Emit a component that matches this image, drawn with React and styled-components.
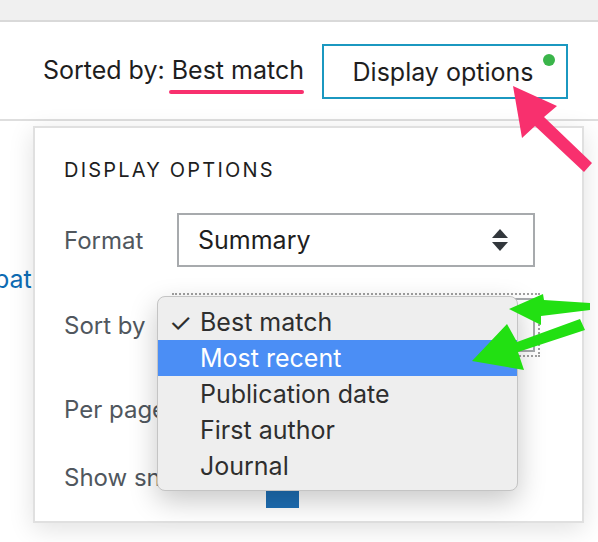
import React from 'react';
import styled, { createGlobalStyle } from 'styled-components';

const GlobalStyle = createGlobalStyle`
  html, body {
    margin: 0;
    padding: 0;
    background: #ffffff;
  }
  body {
    font-family: Inter, "Open Sans", Roboto, sans-serif;
    color: #1e1e1e;
  }
`;

const Page = styled.div`
  position: relative;
  width: 598px;
  height: 542px;
  overflow: hidden;
  background: #fff;
`;

const TopBand = styled.div`
  height: 20px;
  background: #f0f0f0;
  border-bottom: 2px solid #d9d9d9;
`;

const Toolbar = styled.div`
  height: 97px;
  display: flex;
  align-items: center;
  justify-content: flex-end;
  gap: 18px;
  padding-right: 30px;
  border-bottom: 2px solid #dedede;
  font-size: 25px;
`;

const SortedBy = styled.span`
  color: #1e1e1e;
  margin-top: -2px;
`;

const SortValue = styled.span`
  position: relative;
  &::after {
    content: '';
    position: absolute;
    left: -3px;
    right: 0;
    bottom: -9px;
    height: 4px;
    border-radius: 2px;
    background: #f8306e;
  }
`;

const DisplayButton = styled.button`
  position: relative;
  width: 246px;
  height: 55px;
  border: 2px solid #1b98c0;
  background: #fff;
  font: inherit;
  font-size: 25px;
  color: #1e1e1e;
  padding: 0 4px 0 0;
  margin-top: 2px;
`;

const Dot = styled.span`
  position: absolute;
  right: 11px;
  top: 8px;
  width: 12px;
  height: 12px;
  border-radius: 50%;
  background: #3ab54a;
`;

const Results = styled.div`
  padding-top: 143px;
  font-size: 25px;
`;

const ResultLink = styled.a`
  display: block;
  margin-left: -6px;
  color: #0d6bb3;
  text-decoration: none;
`;

const Panel = styled.div`
  position: absolute;
  left: 33px;
  top: 126px;
  width: 551px;
  height: 397px;
  background: #fff;
  border: 2px solid #e0e0e0;
  box-shadow: 0 6px 24px rgba(0, 0, 0, 0.12);
  padding: 30px 46px 0 29px;
  box-sizing: border-box;
`;

const Heading = styled.div`
  font-size: 20px;
  line-height: 24px;
  letter-spacing: 2.2px;
  color: #1e1e1e;
`;

const FieldRow = styled.div`
  display: flex;
  align-items: center;
  height: 54px;
  margin-top: ${(p) => p.gap}px;
`;

const Label = styled.span`
  width: 113px;
  flex: none;
  font-size: 24px;
  color: #50575e;
  white-space: nowrap;
`;

const SelectBox = styled.div`
  position: relative;
  box-sizing: border-box;
  width: ${(p) => p.width || 358}px;
  height: 54px;
  border: 2px solid #a7aaad;
  display: flex;
  align-items: center;
  justify-content: space-between;
  padding: 0 24px 0 19px;
  font-size: 25px;
  color: #1e1e1e;
  background: #fff;
  outline: ${(p) => (p.focused ? '2px dotted #a0a0a0' : 'none')};
  outline-offset: 3px;
`;

const Toggle = styled.span`
  display: block;
  width: 33px;
  height: 26px;
  margin-left: 89px;
  margin-top: 36px;
  background: #1e6fb5;
`;

const Menu = styled.ul`
  position: absolute;
  left: 157px;
  top: 296px;
  width: 361px;
  height: 195px;
  box-sizing: border-box;
  margin: 0;
  padding: 7px 0 0;
  list-style: none;
  background: #eeeeee;
  border: 1px solid #c4c4c4;
  border-radius: 8px;
  box-shadow: 0 10px 28px rgba(0, 0, 0, 0.22);
  font-size: 25px;
`;

const MenuItem = styled.li`
  display: flex;
  align-items: center;
  height: 36px;
  padding-left: 11px;
  color: ${(p) => (p.active ? '#fff' : '#2e2e2e')};
  background: ${(p) => (p.active ? '#4b8ef5' : 'transparent')};
`;

const Check = styled.span`
  width: 31px;
  flex: none;
  font-size: 26px;
`;

const Overlay = styled.svg`
  position: absolute;
  left: 0;
  top: 0;
  pointer-events: none;
`;

const UpDown = () => (
  <svg width="18" height="24" viewBox="0 0 18 24">
    <path d="M9 1 L17 10 H1 Z" fill="#32373c" />
    <path d="M9 23 L17 14 H1 Z" fill="#32373c" />
  </svg>
);

const options = ['Best match', 'Most recent', 'Publication date', 'First author', 'Journal'];

export default function App() {
  return (
    <Page>
      <GlobalStyle />
      <TopBand />
      <Toolbar>
        <SortedBy>
          Sorted by: <SortValue>Best match</SortValue>
        </SortedBy>
        <DisplayButton>
          Display options
          <Dot />
        </DisplayButton>
      </Toolbar>
      <Results>
        <ResultLink href="#">bat</ResultLink>
      </Results>

      <Panel>
        <Heading>DISPLAY OPTIONS</Heading>
        <FieldRow gap={31}>
          <Label>Format</Label>
          <SelectBox>
            Summary
            <UpDown />
          </SelectBox>
        </FieldRow>
        <FieldRow gap={31}>
          <Label>Sort by</Label>
          <SelectBox focused>
            Best match
            <UpDown />
          </SelectBox>
        </FieldRow>
        <FieldRow gap={30}>
          <Label>Per page</Label>
          <SelectBox width={110}>10</SelectBox>
        </FieldRow>
        <FieldRow gap={14}>
          <Label>Show snippets</Label>
          <Toggle />
        </FieldRow>
      </Panel>

      <Menu>
        {options.map((o, i) => (
          <MenuItem key={o} active={i === 1}>
            <Check>{i === 0 ? '✓' : ''}</Check>
            {o}
          </MenuItem>
        ))}
      </Menu>

      <Overlay width="598" height="542" viewBox="0 0 598 542">
        <path d="M513 86 L557 106 L544 117 L592 163 L584 172 L535 126 L522 138 Z" fill="#f8306e" />
        <path d="M590 303 L544 300 L543 294 L509 309 L541 325 L541 316 L590 310 Z" fill="#22e012" />
        <path d="M580 319 L517 342 L507 324 L472 361 L524 370 L518 352 L585 330 Z" fill="#22e012" />
      </Overlay>
    </Page>
  );
}
